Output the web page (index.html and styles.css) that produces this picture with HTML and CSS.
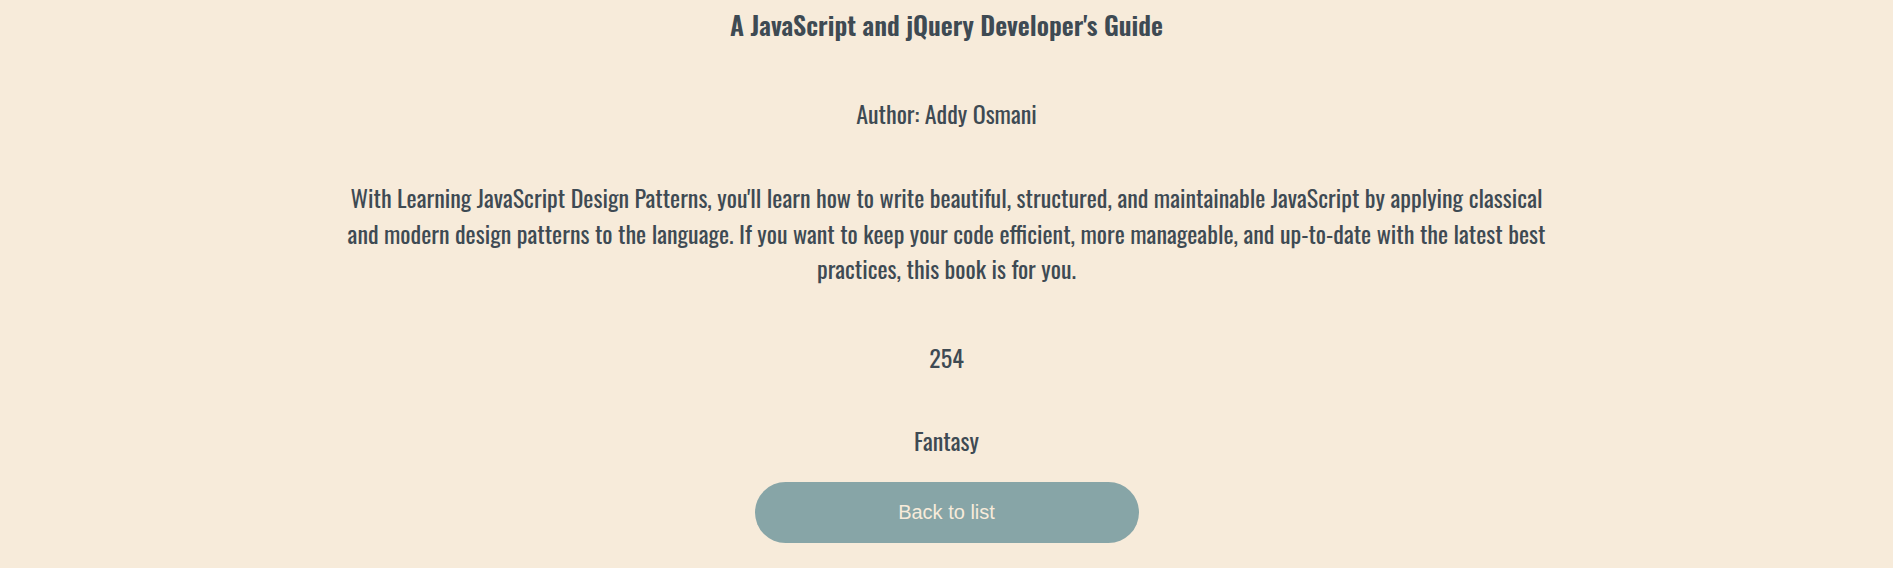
FILE: index.html
```
<!DOCTYPE html>
<html lang="en">
<head>
<meta charset="utf-8">
<title>Book details</title>
<link rel="stylesheet" href="styles.css">
</head>
<body>
<main class="book">
  <h1 class="book-title">A JavaScript and jQuery Developer's Guide</h1>
  <p class="book-author">Author: Addy Osmani</p>
  <p class="book-desc">With Learning JavaScript Design Patterns, you'll learn how to write beautiful, structured, and maintainable JavaScript by applying classical and modern design patterns to the language. If you want to keep your code efficient, more manageable, and up-to-date with the latest best practices, this book is for you.</p>
  <p class="book-pages">254</p>
  <p class="book-genre">Fantasy</p>
  <a class="back-btn" href="#">Back to list</a>
</main>
</body>
</html>
```
FILE: styles.css
```
html, body {
  margin: 0;
  padding: 0;
  background: #f7ebda;
}
body {
  font-family: "Oswald", "Roboto Condensed", "Liberation Sans", sans-serif;
  color: #3e4a53;
  font-size: 24px;
}
.book {
  display: flex;
  flex-direction: column;
  align-items: center;
  text-align: center;
  padding-top: 5px;
}
.book-title {
  margin: 0;
  font-size: 26px;
  font-weight: 600;
  line-height: normal;
}
.book-author {
  margin: 51px 0 0;
  line-height: normal;
}
.book-desc {
  width: 1215px;
  margin: 49px 0 0;
  line-height: 35.7px;
}
.book-pages {
  margin: 52px 0 0;
  line-height: normal;
}
.book-genre {
  margin: 47px 0 0;
  line-height: normal;
}
.back-btn {
  margin-top: 24px;
  width: 384px;
  height: 61px;
  border-radius: 31px;
  background: #87a5a7;
  color: #f7ebda;
  font-family: "Liberation Sans", Arial, sans-serif;
  font-size: 20px;
  text-decoration: none;
  display: flex;
  align-items: center;
  justify-content: center;
}
```
